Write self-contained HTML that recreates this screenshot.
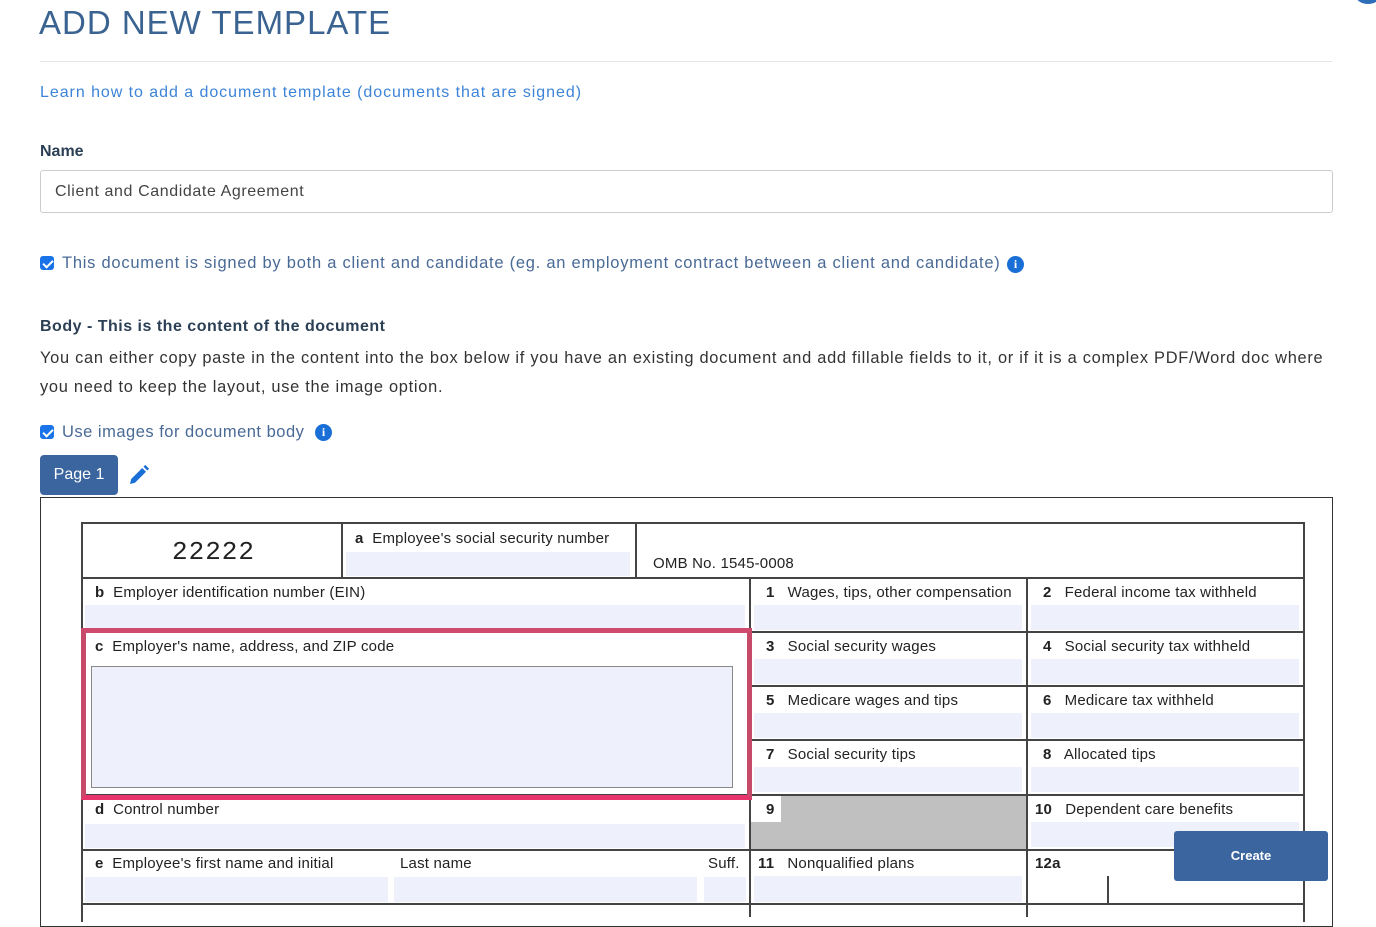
<!DOCTYPE html>
<html><head><meta charset="utf-8"><style>
*{margin:0;padding:0;box-sizing:border-box}
body{width:1376px;height:912px;overflow:hidden;background:#fff;font-family:"Liberation Sans",sans-serif;position:relative}
.a{position:absolute;white-space:nowrap}
.f{font-family:"Liberation Sans",sans-serif;color:#222;font-size:15px;letter-spacing:0.2px}
.fill{position:absolute;background:#eef1fb}
.hl{position:absolute;background:#444;height:2px}
.vl{position:absolute;background:#444;width:2px}
.cb{position:absolute;width:14px;height:14px;background:#1a73e8;border-radius:3px}
.cb:after{content:"";position:absolute;left:4.5px;top:1.5px;width:4px;height:8px;border:solid #fff;border-width:0 2px 2px 0;transform:rotate(45deg)}
.info{position:absolute;width:17px;height:17px;border-radius:50%;background:#1a6fd6;color:#fff;font:bold 12px "Liberation Serif",serif;text-align:center;line-height:17px}
</style></head><body>
<div class="a" style="left:39px;top:4px;font-size:33px;color:#3a6391;letter-spacing:1px">ADD NEW TEMPLATE</div>
<div style="position:absolute;left:40px;top:61px;width:1292px;height:1px;background:#e4e4e4"></div>
<div class="a" style="left:40px;top:84px;font-size:16px;color:#3c84d8;letter-spacing:0.95px">Learn how to add a document template (documents that are signed)</div>
<div class="a" style="left:40px;top:143px;font-size:16px;font-weight:bold;color:#2b3f55">Name</div>
<div style="position:absolute;left:40px;top:170px;width:1293px;height:43px;border:1px solid #ccc;border-radius:3px"></div>
<div class="a" style="left:55px;top:183px;font-size:16px;color:#444;letter-spacing:0.6px">Client and Candidate Agreement</div>
<div class="cb" style="left:40px;top:256px"></div>
<div class="a" style="left:62px;top:254px;font-size:16.5px;color:#4a6a96;letter-spacing:0.75px">This document is signed by both a client and candidate (eg. an employment contract between a client and candidate)</div>
<div class="info" style="left:1007px;top:256px">i</div>
<div class="a" style="left:40px;top:318px;font-size:16px;font-weight:bold;color:#2b3f55;letter-spacing:0.5px">Body - This is the content of the document</div>
<div class="a" style="left:40px;top:344px;font-size:16.4px;color:#333;line-height:29px;letter-spacing:0.72px">You can either copy paste in the content into the box below if you have an existing document and add fillable fields to it, or if it is a complex PDF/Word doc where<br>you need to keep the layout, use the image option.</div>
<div class="cb" style="left:40px;top:425px"></div>
<div class="a" style="left:62px;top:423px;font-size:16.5px;color:#4a6a96;letter-spacing:0.5px">Use images for document body</div>
<div class="info" style="left:315px;top:424px">i</div>
<div style="position:absolute;left:40px;top:455px;width:78px;height:40px;background:#3a659e;border-radius:4px;color:#fff;font-size:16px;line-height:40px;text-align:center">Page 1</div>
<svg style="position:absolute;left:127px;top:463px" width="24" height="24" viewBox="0 0 24 24"><path d="M3 21l1.2-5 11-11 3.8 3.8-11 11z" fill="#1a6fd6"/><path d="M16.5 3.7l1.8-1.8 3.8 3.8-1.8 1.8z" fill="#1a6fd6"/></svg>

<div style="position:absolute;left:40px;top:497px;width:1293px;height:430px;border:1px solid #333"></div>

<div class="fill" style="left:346px;top:552px;width:284px;height:24px"></div>
<div class="fill" style="left:85px;top:605px;width:660px;height:24px"></div>
<div class="fill" style="left:85px;top:824px;width:660px;height:24px"></div>
<div class="fill" style="left:85px;top:877px;width:303px;height:25px"></div>
<div class="fill" style="left:394px;top:877px;width:303px;height:25px"></div>
<div class="fill" style="left:704px;top:877px;width:42px;height:25px"></div>
<div class="fill" style="left:754px;top:605px;width:268px;height:25px"></div>
<div class="fill" style="left:1031px;top:605px;width:268px;height:25px"></div>
<div class="fill" style="left:754px;top:659px;width:268px;height:25px"></div>
<div class="fill" style="left:1031px;top:659px;width:268px;height:25px"></div>
<div class="fill" style="left:754px;top:713px;width:268px;height:25px"></div>
<div class="fill" style="left:1031px;top:713px;width:268px;height:25px"></div>
<div class="fill" style="left:754px;top:767px;width:268px;height:25px"></div>
<div class="fill" style="left:1031px;top:767px;width:268px;height:25px"></div>
<div class="fill" style="left:1031px;top:822px;width:268px;height:25px"></div>
<div class="fill" style="left:754px;top:876px;width:268px;height:26px"></div>
<div style="position:absolute;left:751px;top:796px;width:276px;height:54px;background:#c0c0c0"></div>
<div style="position:absolute;left:751px;top:796px;width:30px;height:26px;background:#fff"></div>

<div class="hl" style="left:81px;top:522px;width:1224px"></div>
<div class="hl" style="left:81px;top:577px;width:1224px"></div>
<div class="hl" style="left:81px;top:631px;width:1224px"></div>
<div class="hl" style="left:750px;top:685px;width:555px"></div>
<div class="hl" style="left:750px;top:739px;width:555px"></div>
<div class="hl" style="left:81px;top:794px;width:1224px"></div>
<div class="hl" style="left:81px;top:849px;width:1224px"></div>
<div class="hl" style="left:81px;top:903px;width:1224px"></div>
<div class="vl" style="left:81px;top:522px;height:400px"></div>
<div class="vl" style="left:1303px;top:522px;height:400px"></div>
<div class="vl" style="left:341px;top:522px;height:56px"></div>
<div class="vl" style="left:635px;top:522px;height:56px"></div>
<div class="vl" style="left:749px;top:577px;height:340px"></div>
<div class="vl" style="left:1026px;top:577px;height:340px"></div>
<div class="vl" style="left:1107px;top:876px;height:27px"></div>

<div style="position:absolute;left:81px;top:628px;width:671px;height:172px;border:5px solid #e8336d;border-top-color:#cf4a6c;border-left-color:#c84a6a;border-right-color:#c84a6a"></div>
<div style="position:absolute;left:91px;top:666px;width:642px;height:122px;border:1px solid #888;background:#eef1fb"></div>

<div class="a" style="left:172px;top:537px;font:26px 'Liberation Mono',monospace;color:#222;letter-spacing:1px">22222</div>
<div class="a f" style="left:355px;top:530px"><b>a</b>&nbsp; Employee's social security number</div>
<div class="a f" style="left:653px;top:555px">OMB No. 1545-0008</div>
<div class="a f" style="left:95px;top:584px"><b>b</b>&nbsp; Employer identification number (EIN)</div>
<div class="a f" style="left:95px;top:638px"><b>c</b>&nbsp; Employer's name, address, and ZIP code</div>
<div class="a f" style="left:95px;top:801px"><b>d</b>&nbsp; Control number</div>
<div class="a f" style="left:95px;top:855px"><b>e</b>&nbsp; Employee's first name and initial</div>
<div class="a f" style="left:400px;top:855px">Last name</div>
<div class="a f" style="left:708px;top:855px">Suff.</div>
<div class="a f" style="left:766px;top:584px"><b>1</b>&nbsp;&nbsp; Wages, tips, other compensation</div>
<div class="a f" style="left:1043px;top:584px"><b>2</b>&nbsp;&nbsp; Federal income tax withheld</div>
<div class="a f" style="left:766px;top:638px"><b>3</b>&nbsp;&nbsp; Social security wages</div>
<div class="a f" style="left:1043px;top:638px"><b>4</b>&nbsp;&nbsp; Social security tax withheld</div>
<div class="a f" style="left:766px;top:692px"><b>5</b>&nbsp;&nbsp; Medicare wages and tips</div>
<div class="a f" style="left:1043px;top:692px"><b>6</b>&nbsp;&nbsp; Medicare tax withheld</div>
<div class="a f" style="left:766px;top:746px"><b>7</b>&nbsp;&nbsp; Social security tips</div>
<div class="a f" style="left:1043px;top:746px"><b>8</b>&nbsp;&nbsp; Allocated tips</div>
<div class="a f" style="left:766px;top:801px"><b>9</b></div>
<div class="a f" style="left:1035px;top:801px"><b>10</b>&nbsp;&nbsp; Dependent care benefits</div>
<div class="a f" style="left:758px;top:855px"><b>11</b>&nbsp;&nbsp; Nonqualified plans</div>
<div class="a f" style="left:1035px;top:855px"><b>12a</b></div>

<div style="position:absolute;left:1174px;top:831px;width:154px;height:50px;background:#3a659e;border-radius:3px;color:#fff;font-size:13px;font-weight:bold;text-align:center;line-height:50px">Create</div>
<div style="position:absolute;left:1356px;top:-12px;width:24px;height:16px;border-radius:50%;background:#2f6db8"></div>
</body></html>
